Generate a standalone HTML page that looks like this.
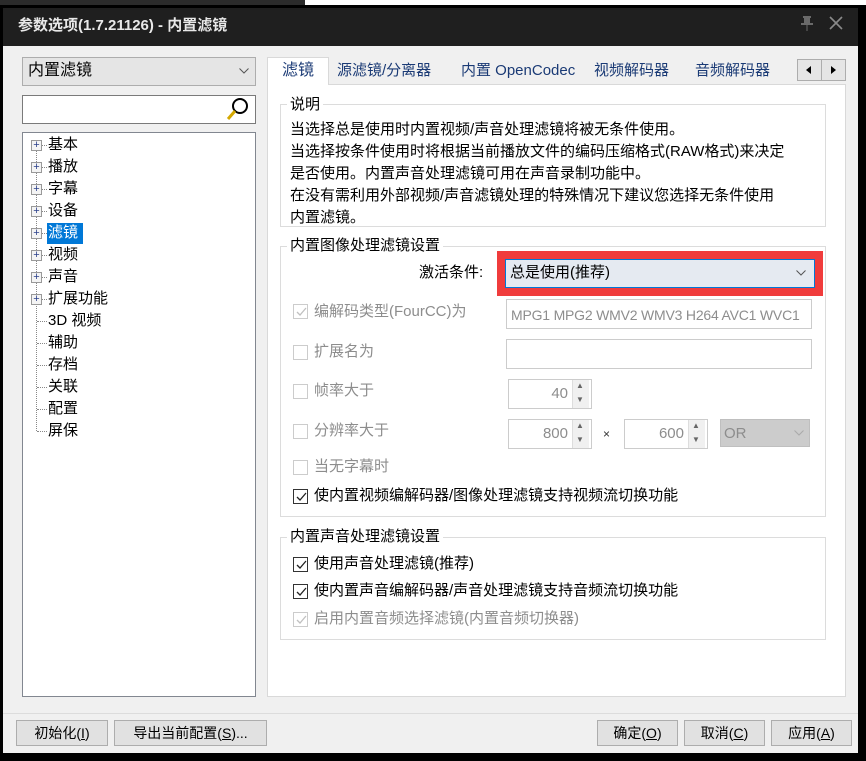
<!DOCTYPE html>
<html><head><meta charset="utf-8"><style>
*{margin:0;padding:0;box-sizing:border-box}
body{width:866px;height:761px;background:#fff;position:relative;overflow:hidden;font-family:"Liberation Sans","Noto Sans CJK SC",sans-serif;font-size:15px;color:#000}
.a{position:absolute;white-space:nowrap}
.box{position:absolute;border:1px solid #7a7a7a;background:#fff}
.grp{position:absolute;border:1px solid #dcdcdc}
.gl{position:absolute;background:#fff;padding:0 3px;line-height:20px}
.cb{position:absolute;width:15px;height:15px;border:1px solid #333;background:#fff}
.cb.d{border-color:#ccc}
.cb svg{position:absolute;left:1px;top:1px}
.btn{position:absolute;height:26px;border:1px solid #adadad;background:#e1e1e1;text-align:center;line-height:24px;font-size:14px}
.dis{color:#8d8d8d}
.spin{position:absolute;width:17px;border-left:1px solid #ddd;background:#f0f0f0}
</style></head><body>
<div class="a" style="left:0;top:0;width:305px;height:8px;background:#2b2b2b"></div>
<div class="a" style="left:0;top:5px;width:866px;height:756px;background:#000"></div>
<div class="a" style="left:3px;top:8px;width:855px;height:38px;background:#1f1f1f"></div>
<div class="a" style="left:18px;top:14px;color:#e8e8e8;font-size:15px;font-weight:bold;line-height:24px">参数选项(1.7.21126) - 内置滤镜</div>
<svg class="a" style="left:800px;top:15px" width="14" height="16"><path d="M3 1h8v2h-1v5h3v2H1V8h3V3H3z M6.5 10v6h1v-6z" fill="#6a6a6a"/></svg>
<svg class="a" style="left:829px;top:16px" width="14" height="14"><path d="M1 1l12 12M13 1L1 13" stroke="#8a8a8a" stroke-width="1.6"/></svg>
<div class="a" style="left:3px;top:46px;width:855px;height:707px;background:#f0f0f0"></div>

<!-- left combo -->
<div class="box" style="left:22px;top:57px;width:234px;height:29px;background:#e5e5e5;border-color:#adadad"></div>
<div class="a" style="left:28px;top:60px;line-height:22px;font-size:16px">内置滤镜</div>
<svg class="a" style="left:239px;top:68px" width="10" height="6"><path d="M0.5 0.5l4.5 4.5 4.5-4.5" fill="none" stroke="#555"/></svg>
<div class="box" style="left:22px;top:95px;width:234px;height:29px"></div>
<svg class="a" style="left:224px;top:96px" width="28" height="28"><circle cx="16" cy="10" r="7" fill="none" stroke="#000" stroke-width="2"/><line x1="11" y1="15" x2="4" y2="23" stroke="#d4a800" stroke-width="3"/></svg>
<div class="box" style="left:22px;top:132px;width:234px;height:565px;border-color:#828790"></div>
<div class="a" style="left:47px;top:223px;width:36px;height:21px;background:#0078d7"></div>
<div class="a" style="left:36px;top:148px;width:1px;height:152px;border-left:1px dotted #888"></div>
<div class="a" style="left:36px;top:300px;width:1px;height:131px;border-left:1px dotted #888"></div>
<div id="tree"></div>

<!-- tabs -->
<div class="a" style="left:267px;top:84px;width:579px;height:613px;background:#fff;border:1px solid #d9d9d9"></div>
<div class="a" style="left:267px;top:57px;width:62px;height:28px;background:#fff;border:1px solid #d9d9d9;border-bottom:none"></div>
<div class="a" style="left:282px;top:60px;color:#1a3a75;font-size:16px;line-height:22px">滤镜</div>
<div class="a" style="left:337px;top:60px;color:#1a3a75;font-size:15px;line-height:22px">源滤镜/分离器</div>
<div class="a" style="left:461px;top:60px;color:#1a3a75;font-size:15px;line-height:22px">内置 OpenCodec</div>
<div class="a" style="left:594px;top:60px;color:#1a3a75;font-size:15px;line-height:22px">视频解码器</div>
<div class="a" style="left:695px;top:60px;color:#1a3a75;font-size:15px;line-height:22px">音频解码器</div>
<div class="a" style="left:797px;top:59px;width:49px;height:22px;background:#e5e5e5;border:1px solid #adadad"></div>
<div class="a" style="left:821px;top:59px;width:1px;height:22px;background:#adadad"></div>
<svg class="a" style="left:806px;top:66px" width="5" height="8"><path d="M5 0v8L0 4z"/></svg>
<svg class="a" style="left:831px;top:66px" width="5" height="8"><path d="M0 0v8l5-4z"/></svg>

<!-- 说明 -->
<div class="grp" style="left:280px;top:104px;width:546px;height:123px"></div>
<div class="gl" style="left:287px;top:95px">说明</div>
<div class="a" style="left:290px;top:119px;line-height:22px;font-size:15px">当选择总是使用时内置视频/声音处理滤镜将被无条件使用。<br>当选择按条件使用时将根据当前播放文件的编码压缩格式(RAW格式)来决定<br>是否使用。内置声音处理滤镜可用在声音录制功能中。<br>在没有需利用外部视频/声音滤镜处理的特殊情况下建议您选择无条件使用<br>内置滤镜。</div>

<!-- 图像 -->
<div class="grp" style="left:280px;top:246px;width:546px;height:271px"></div>
<div class="gl" style="left:287px;top:236px">内置图像处理滤镜设置</div>
<div class="a" style="left:419px;top:262px;line-height:22px">激活条件:</div>
<div class="a" style="left:497px;top:251px;width:326px;height:45px;background:#f03c3c"></div>
<div class="a" style="left:505px;top:259px;width:310px;height:29px;background:#e5eaf1;border:1px solid #0078d7"></div>
<div class="a" style="left:510px;top:262px;line-height:22px">总是使用(推荐)</div>
<svg class="a" style="left:796px;top:270px" width="10" height="6"><path d="M0.5 0.5l4.5 4.5 4.5-4.5" fill="none" stroke="#555"/></svg>

<div class="cb d" style="left:293px;top:304px"><svg width="13" height="13"><path d="M2 6l3 3 6-7" fill="none" stroke="#c0c0c0" stroke-width="1.3"/></svg></div>
<div class="a dis" style="left:314px;top:301px;line-height:22px">编解码类型(FourCC)为</div>
<div class="box" style="left:506px;top:299px;width:306px;height:30px;border-color:#ccc;background:#fff;overflow:hidden"><div class="a dis" style="left:4px;top:4px;line-height:22px;font-size:14px;letter-spacing:-0.2px">MPG1 MPG2 WMV2 WMV3 H264 AVC1 WVC1</div></div>

<div class="cb d" style="left:293px;top:345px"></div>
<div class="a dis" style="left:314px;top:341px;line-height:22px">扩展名为</div>
<div class="box" style="left:506px;top:339px;width:306px;height:30px;border-color:#ccc"></div>

<div class="cb d" style="left:293px;top:384px"></div>
<div class="a dis" style="left:314px;top:380px;line-height:22px">帧率大于</div>
<div class="box" style="left:508px;top:379px;width:84px;height:30px;border-color:#ccc"></div>
<div class="a dis" style="left:548px;top:383px;line-height:22px;width:20px;text-align:right">40</div>
<div class="spin" style="left:572px;top:380px;height:28px"></div>
<div class="a" style="left:576px;top:381px;font-size:8px;color:#666">▲</div>
<div class="a" style="left:576px;top:395px;font-size:8px;color:#666">▼</div>

<div class="cb d" style="left:293px;top:424px"></div>
<div class="a dis" style="left:314px;top:420px;line-height:22px">分辨率大于</div>
<div class="box" style="left:508px;top:419px;width:84px;height:30px;border-color:#ccc"></div>
<div class="a dis" style="left:538px;top:423px;line-height:22px;width:30px;text-align:right">800</div>
<div class="spin" style="left:572px;top:420px;height:28px"></div>
<div class="a" style="left:576px;top:421px;font-size:8px;color:#666">▲</div>
<div class="a" style="left:576px;top:435px;font-size:8px;color:#666">▼</div>
<div class="a" style="left:603px;top:423px;line-height:22px;font-size:12px;color:#333">×</div>
<div class="box" style="left:624px;top:419px;width:84px;height:30px;border-color:#ccc"></div>
<div class="a dis" style="left:654px;top:423px;line-height:22px;width:30px;text-align:right">600</div>
<div class="spin" style="left:688px;top:420px;height:28px"></div>
<div class="a" style="left:692px;top:421px;font-size:8px;color:#666">▲</div>
<div class="a" style="left:692px;top:435px;font-size:8px;color:#666">▼</div>
<div class="a" style="left:720px;top:419px;width:90px;height:28px;background:#ccc;border:1px solid #bfbfbf"></div>
<div class="a dis" style="left:724px;top:423px;line-height:22px">OR</div>
<svg class="a" style="left:794px;top:430px" width="10" height="6"><path d="M0.5 0.5l4.5 4.5 4.5-4.5" fill="none" stroke="#aaa"/></svg>

<div class="cb d" style="left:293px;top:460px"></div>
<div class="a dis" style="left:314px;top:456px;line-height:22px">当无字幕时</div>
<div class="cb" style="left:293px;top:489px"><svg width="13" height="13"><path d="M2 6l3 3 6-7" fill="none" stroke="#222" stroke-width="1.3"/></svg></div>
<div class="a" style="left:314px;top:485px;line-height:22px">使内置视频编解码器/图像处理滤镜支持视频流切换功能</div>

<!-- 声音 -->
<div class="grp" style="left:280px;top:537px;width:546px;height:103px"></div>
<div class="gl" style="left:287px;top:527px">内置声音处理滤镜设置</div>
<div class="cb" style="left:293px;top:557px"><svg width="13" height="13"><path d="M2 6l3 3 6-7" fill="none" stroke="#222" stroke-width="1.3"/></svg></div>
<div class="a" style="left:314px;top:553px;line-height:22px">使用声音处理滤镜(推荐)</div>
<div class="cb" style="left:293px;top:584px"><svg width="13" height="13"><path d="M2 6l3 3 6-7" fill="none" stroke="#222" stroke-width="1.3"/></svg></div>
<div class="a" style="left:314px;top:580px;line-height:22px">使内置声音编解码器/声音处理滤镜支持音频流切换功能</div>
<div class="cb d" style="left:293px;top:612px"><svg width="13" height="13"><path d="M2 6l3 3 6-7" fill="none" stroke="#c0c0c0" stroke-width="1.3"/></svg></div>
<div class="a dis" style="left:314px;top:608px;line-height:22px">启用内置音频选择滤镜(内置音频切换器)</div>

<!-- footer -->
<div class="a" style="left:3px;top:713px;width:855px;height:1px;background:#dcdcdc"></div>
<div class="btn" style="left:16px;top:720px;width:92px">初始化(<u>I</u>)</div>
<div class="btn" style="left:114px;top:720px;width:153px">导出当前配置(<u>S</u>)...</div>
<div class="btn" style="left:597px;top:720px;width:81px">确定(<u>O</u>)</div>
<div class="btn" style="left:684px;top:720px;width:81px">取消(<u>C</u>)</div>
<div class="btn" style="left:771px;top:720px;width:81px">应用(<u>A</u>)</div>

<script>
var items=["基本","播放","字幕","设备","滤镜","视频","声音","扩展功能","3D 视频","辅助","存档","关联","配置","屏保"];
var h="";
items.forEach(function(t,i){var y=134+i*22;
if(i<8){h+='<div class="a" style="left:31px;top:'+(y+6)+'px;width:11px;height:11px;border:1px solid #999;background:#f4f4f4;font-size:11px;line-height:9px;text-align:center;color:#2a3f8a">+</div><div class="a" style="left:42px;top:'+(y+11)+'px;width:5px;border-top:1px dotted #888"></div>';}
else{h+='<div class="a" style="left:37px;top:'+(y+11)+'px;width:10px;border-top:1px dotted #888"></div>';}
h+='<div class="a" style="left:48px;top:'+y+'px;line-height:22px;font-size:15px;'+(i==4?'color:#fff':'')+'">'+t+'</div>';});
document.getElementById("tree").innerHTML=h;
</script>
</body></html>
